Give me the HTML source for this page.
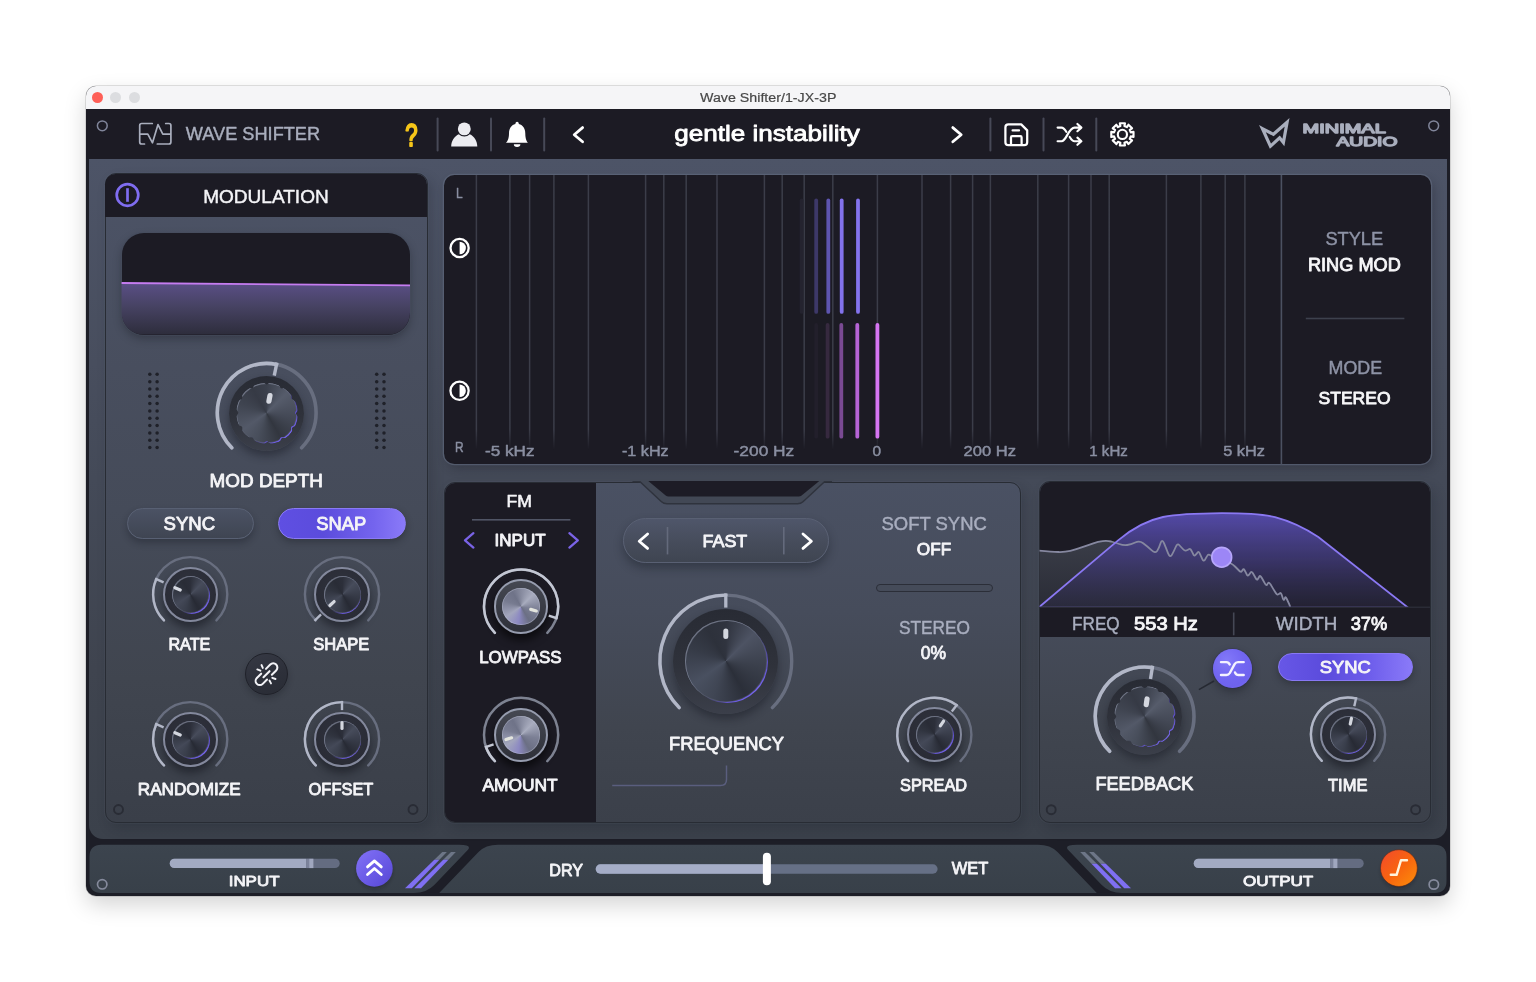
<!DOCTYPE html>
<html><head><meta charset="utf-8"><title>Wave Shifter</title>
<style>
html,body{margin:0;padding:0;background:#fff;}
#root{position:relative;width:1536px;height:982px;overflow:hidden;background:#fff;font-family:"Liberation Sans",sans-serif;}
#ov{position:absolute;left:0;top:0;pointer-events:none;will-change:transform;}
.ring,.cap{position:absolute;border-radius:50%;}
.ringD{background:linear-gradient(180deg,#282b34 0%,#2f323b 55%,#3b3f4a 100%);box-shadow:0 5px 9px rgba(20,22,30,.45);}
.ringS{box-sizing:border-box;border:2px solid #83889c;background:radial-gradient(circle at 50% 40%,#30333e 0%,#2a2c36 70%,#24262f 100%);box-shadow:0 6px 9px rgba(18,20,28,.55);}
.ringF{box-sizing:border-box;border:2px solid #969cae;background:linear-gradient(180deg,#454852 0%,#2e3039 100%);box-shadow:0 6px 9px rgba(0,0,0,.6);}
.capD{background:conic-gradient(from 0deg,#30343f 0deg,#4d5363 45deg,#3a3f4b 100deg,#2b2f39 150deg,#404654 200deg,#495060 235deg,#363b47 290deg,#2d313b 330deg,#30343f 360deg);box-shadow:inset 1px 1px .5px rgba(165,170,190,.45),inset 0 0 0 .7px rgba(120,126,148,.35);}
.capM{background:conic-gradient(from 0deg,#3b404c 0deg,#565c6b 45deg,#444956 100deg,#32363f 150deg,#484e5b 200deg,#535968 235deg,#3f4450 290deg,#363a45 330deg,#3b404c 360deg);}
.capS{background:conic-gradient(from 0deg,#2c2f3a 0deg,#474c5b 45deg,#353946 100deg,#272a34 150deg,#3a3f4c 200deg,#444958 235deg,#30343f 290deg,#292c36 330deg,#2c2f3a 360deg);}
.capF{background:conic-gradient(from 0deg,#868a9e 0deg,#a9adbf 45deg,#7c8095 100deg,#6b6f84 150deg,#8c89c2 190deg,#a3a6bd 235deg,#777b90 290deg,#6f7388 330deg,#868a9e 360deg);box-shadow:inset 0 0 0 .8px rgba(200,205,225,.4);}
.glow{background:conic-gradient(from 0deg,rgba(0,0,0,0) 0deg,rgba(0,0,0,0) 40deg,#5a4cc8 80deg,#7766ee 130deg,#6a5ae0 175deg,rgba(0,0,0,0) 215deg,rgba(0,0,0,0) 360deg);}

</style></head><body>
<div id="root">
<div class="" style="position:absolute;left:86px;top:86px;width:1364px;height:810px;border-radius:10px;background:#1d1e27;box-shadow:0 9px 22px rgba(0,0,0,.17),0 0 0 .5px rgba(0,0,0,.22);"></div>
<div class="" style="position:absolute;left:86px;top:86px;width:1364px;height:23px;border-radius:10px 10px 0 0;background:#f5f5f7;"></div>
<div class="" style="position:absolute;left:91.7px;top:91.7px;width:11.199999999999989px;height:11.199999999999989px;border-radius:50%;background:#fe5f57;"></div>
<div class="" style="position:absolute;left:110.2px;top:91.7px;width:11.199999999999989px;height:11.199999999999989px;border-radius:50%;background:#dcdde0;"></div>
<div class="" style="position:absolute;left:128.70000000000002px;top:91.7px;width:11.199999999999989px;height:11.199999999999989px;border-radius:50%;background:#dcdde0;"></div>
<div class="" style="position:absolute;left:86px;top:109px;width:1364px;height:49.5px;background:#1c1b24;"></div>
<div class="" style="position:absolute;left:89px;top:158.5px;width:1358px;height:680.5px;border-radius:0 0 14px 14px;background:linear-gradient(180deg,#4d5467 0%,#484e5e 30%,#444a58 47%,#3f444f 75%,#3b414b 100%);"></div>
<div class="" style="position:absolute;left:104.5px;top:173px;width:323.0px;height:650px;border-radius:11px;box-sizing:border-box;border:1.6px solid #282c34;box-shadow:0 0 0 1px rgba(110,118,138,.10), 4px 6px 12px rgba(25,28,36,.22);background:linear-gradient(180deg,#4c5366 0%,#484e5e 30%,#454b59 52%,#40454f 78%,#3a3f49 100%);"></div>
<div class="" style="position:absolute;left:105px;top:173.5px;width:322px;height:43.5px;border-radius:10.5px 10.5px 0 0;background:#1c1b24;"></div>
<div class="" style="position:absolute;left:121.6px;top:233px;width:288.4px;height:101.60000000000002px;border-radius:22px;background:#1c1b24;overflow:hidden;box-shadow:0 0 0 1px rgba(70,76,92,.55),0 4px 8px rgba(20,22,30,.35);"></div>
<div class="ring ringD" style="left:229.1px;top:375.8px;width:75.2px;height:75.2px"></div>
<div class="cap glow" style="left:237.3px;top:383.3px;width:60.6px;height:60.6px;clip-path:path('M30.30,1.90L30.80,1.80L31.30,1.54L31.83,1.19L32.36,0.84L32.90,0.56L33.44,0.39L33.98,0.32L34.51,0.33L35.04,0.38L35.56,0.46L36.08,0.56L36.60,0.66L37.12,0.78L37.63,0.90L38.14,1.03L38.65,1.17L39.16,1.32L39.66,1.48L40.16,1.65L40.66,1.83L41.16,2.02L41.64,2.24L42.10,2.50L42.53,2.83L42.91,3.25L43.25,3.76L43.53,4.33L43.81,4.89L44.12,5.37L44.50,5.70L44.98,5.87L45.55,5.90L46.18,5.85L46.81,5.82L47.42,5.85L47.98,5.97L48.48,6.18L48.93,6.45L49.36,6.76L49.78,7.09L50.18,7.43L50.57,7.78L50.96,8.14L51.35,8.50L51.73,8.87L52.10,9.25L52.46,9.64L52.82,10.03L53.17,10.42L53.51,10.82L53.84,11.24L54.15,11.67L54.42,12.12L54.63,12.62L54.75,13.18L54.78,13.79L54.75,14.42L54.70,15.05L54.73,15.62L54.90,16.10L55.23,16.48L55.71,16.79L56.27,17.07L56.84,17.35L57.35,17.69L57.77,18.07L58.10,18.50L58.36,18.96L58.58,19.44L58.77,19.94L58.95,20.44L59.12,20.94L59.28,21.44L59.43,21.95L59.57,22.46L59.70,22.97L59.82,23.48L59.94,24.00L60.04,24.52L60.14,25.04L60.22,25.56L60.27,26.09L60.28,26.62L60.21,27.16L60.04,27.70L59.76,28.24L59.41,28.77L59.06,29.30L58.80,29.80L58.70,30.30L58.80,30.80L59.06,31.30L59.41,31.83L59.76,32.36L60.04,32.90L60.21,33.44L60.28,33.98L60.27,34.51L60.22,35.04L60.14,35.56L60.04,36.08L59.94,36.60L59.82,37.12L59.70,37.63L59.57,38.14L59.43,38.65L59.28,39.16L59.12,39.66L58.95,40.16L58.77,40.66L58.58,41.16L58.36,41.64L58.10,42.10L57.77,42.53L57.35,42.91L56.84,43.25L56.27,43.53L55.71,43.81L55.23,44.12L54.90,44.50L54.73,44.98L54.70,45.55L54.75,46.18L54.78,46.81L54.75,47.42L54.63,47.98L54.42,48.48L54.15,48.93L53.84,49.36L53.51,49.78L53.17,50.18L52.82,50.57L52.46,50.96L52.10,51.35L51.73,51.73L51.35,52.10L50.96,52.46L50.57,52.82L50.18,53.17L49.78,53.51L49.36,53.84L48.93,54.15L48.48,54.42L47.98,54.63L47.42,54.75L46.81,54.78L46.18,54.75L45.55,54.70L44.98,54.73L44.50,54.90L44.12,55.23L43.81,55.71L43.53,56.27L43.25,56.84L42.91,57.35L42.53,57.77L42.10,58.10L41.64,58.36L41.16,58.58L40.66,58.77L40.16,58.95L39.66,59.12L39.16,59.28L38.65,59.43L38.14,59.57L37.63,59.70L37.12,59.82L36.60,59.94L36.08,60.04L35.56,60.14L35.04,60.22L34.51,60.27L33.98,60.28L33.44,60.21L32.90,60.04L32.36,59.76L31.83,59.41L31.30,59.06L30.80,58.80L30.30,58.70L29.80,58.80L29.30,59.06L28.77,59.41L28.24,59.76L27.70,60.04L27.16,60.21L26.62,60.28L26.09,60.27L25.56,60.22L25.04,60.14L24.52,60.04L24.00,59.94L23.48,59.82L22.97,59.70L22.46,59.57L21.95,59.43L21.44,59.28L20.94,59.12L20.44,58.95L19.94,58.77L19.44,58.58L18.96,58.36L18.50,58.10L18.07,57.77L17.69,57.35L17.35,56.84L17.07,56.27L16.79,55.71L16.48,55.23L16.10,54.90L15.62,54.73L15.05,54.70L14.42,54.75L13.79,54.78L13.18,54.75L12.62,54.63L12.12,54.42L11.67,54.15L11.24,53.84L10.82,53.51L10.42,53.17L10.03,52.82L9.64,52.46L9.25,52.10L8.87,51.73L8.50,51.35L8.14,50.96L7.78,50.57L7.43,50.18L7.09,49.78L6.76,49.36L6.45,48.93L6.18,48.48L5.97,47.98L5.85,47.42L5.82,46.81L5.85,46.18L5.90,45.55L5.87,44.98L5.70,44.50L5.37,44.12L4.89,43.81L4.33,43.53L3.76,43.25L3.25,42.91L2.83,42.53L2.50,42.10L2.24,41.64L2.02,41.16L1.83,40.66L1.65,40.16L1.48,39.66L1.32,39.16L1.17,38.65L1.03,38.14L0.90,37.63L0.78,37.12L0.66,36.60L0.56,36.08L0.46,35.56L0.38,35.04L0.33,34.51L0.32,33.98L0.39,33.44L0.56,32.90L0.84,32.36L1.19,31.83L1.54,31.30L1.80,30.80L1.90,30.30L1.80,29.80L1.54,29.30L1.19,28.77L0.84,28.24L0.56,27.70L0.39,27.16L0.32,26.62L0.33,26.09L0.38,25.56L0.46,25.04L0.56,24.52L0.66,24.00L0.78,23.48L0.90,22.97L1.03,22.46L1.17,21.95L1.32,21.44L1.48,20.94L1.65,20.44L1.83,19.94L2.02,19.44L2.24,18.96L2.50,18.50L2.83,18.07L3.25,17.69L3.76,17.35L4.33,17.07L4.89,16.79L5.37,16.48L5.70,16.10L5.87,15.62L5.90,15.05L5.85,14.42L5.82,13.79L5.85,13.18L5.97,12.62L6.18,12.12L6.45,11.67L6.76,11.24L7.09,10.82L7.43,10.42L7.78,10.03L8.14,9.64L8.50,9.25L8.87,8.87L9.25,8.50L9.64,8.14L10.03,7.78L10.42,7.43L10.82,7.09L11.24,6.76L11.67,6.45L12.12,6.18L12.62,5.97L13.18,5.85L13.79,5.82L14.42,5.85L15.05,5.90L15.62,5.87L16.10,5.70L16.48,5.37L16.79,4.89L17.07,4.33L17.35,3.76L17.69,3.25L18.07,2.83L18.50,2.50L18.96,2.24L19.44,2.02L19.94,1.83L20.44,1.65L20.94,1.48L21.44,1.32L21.95,1.17L22.46,1.03L22.97,0.90L23.48,0.78L24.00,0.66L24.52,0.56L25.04,0.46L25.56,0.38L26.09,0.33L26.62,0.32L27.16,0.39L27.70,0.56L28.24,0.84L28.77,1.19L29.30,1.54L29.80,1.80Z');"></div>
<div class="cap capD capM" style="left:236.4px;top:382.5px;width:60.6px;height:60.6px;clip-path:path('M30.30,1.90L30.80,1.80L31.30,1.54L31.83,1.19L32.36,0.84L32.90,0.56L33.44,0.39L33.98,0.32L34.51,0.33L35.04,0.38L35.56,0.46L36.08,0.56L36.60,0.66L37.12,0.78L37.63,0.90L38.14,1.03L38.65,1.17L39.16,1.32L39.66,1.48L40.16,1.65L40.66,1.83L41.16,2.02L41.64,2.24L42.10,2.50L42.53,2.83L42.91,3.25L43.25,3.76L43.53,4.33L43.81,4.89L44.12,5.37L44.50,5.70L44.98,5.87L45.55,5.90L46.18,5.85L46.81,5.82L47.42,5.85L47.98,5.97L48.48,6.18L48.93,6.45L49.36,6.76L49.78,7.09L50.18,7.43L50.57,7.78L50.96,8.14L51.35,8.50L51.73,8.87L52.10,9.25L52.46,9.64L52.82,10.03L53.17,10.42L53.51,10.82L53.84,11.24L54.15,11.67L54.42,12.12L54.63,12.62L54.75,13.18L54.78,13.79L54.75,14.42L54.70,15.05L54.73,15.62L54.90,16.10L55.23,16.48L55.71,16.79L56.27,17.07L56.84,17.35L57.35,17.69L57.77,18.07L58.10,18.50L58.36,18.96L58.58,19.44L58.77,19.94L58.95,20.44L59.12,20.94L59.28,21.44L59.43,21.95L59.57,22.46L59.70,22.97L59.82,23.48L59.94,24.00L60.04,24.52L60.14,25.04L60.22,25.56L60.27,26.09L60.28,26.62L60.21,27.16L60.04,27.70L59.76,28.24L59.41,28.77L59.06,29.30L58.80,29.80L58.70,30.30L58.80,30.80L59.06,31.30L59.41,31.83L59.76,32.36L60.04,32.90L60.21,33.44L60.28,33.98L60.27,34.51L60.22,35.04L60.14,35.56L60.04,36.08L59.94,36.60L59.82,37.12L59.70,37.63L59.57,38.14L59.43,38.65L59.28,39.16L59.12,39.66L58.95,40.16L58.77,40.66L58.58,41.16L58.36,41.64L58.10,42.10L57.77,42.53L57.35,42.91L56.84,43.25L56.27,43.53L55.71,43.81L55.23,44.12L54.90,44.50L54.73,44.98L54.70,45.55L54.75,46.18L54.78,46.81L54.75,47.42L54.63,47.98L54.42,48.48L54.15,48.93L53.84,49.36L53.51,49.78L53.17,50.18L52.82,50.57L52.46,50.96L52.10,51.35L51.73,51.73L51.35,52.10L50.96,52.46L50.57,52.82L50.18,53.17L49.78,53.51L49.36,53.84L48.93,54.15L48.48,54.42L47.98,54.63L47.42,54.75L46.81,54.78L46.18,54.75L45.55,54.70L44.98,54.73L44.50,54.90L44.12,55.23L43.81,55.71L43.53,56.27L43.25,56.84L42.91,57.35L42.53,57.77L42.10,58.10L41.64,58.36L41.16,58.58L40.66,58.77L40.16,58.95L39.66,59.12L39.16,59.28L38.65,59.43L38.14,59.57L37.63,59.70L37.12,59.82L36.60,59.94L36.08,60.04L35.56,60.14L35.04,60.22L34.51,60.27L33.98,60.28L33.44,60.21L32.90,60.04L32.36,59.76L31.83,59.41L31.30,59.06L30.80,58.80L30.30,58.70L29.80,58.80L29.30,59.06L28.77,59.41L28.24,59.76L27.70,60.04L27.16,60.21L26.62,60.28L26.09,60.27L25.56,60.22L25.04,60.14L24.52,60.04L24.00,59.94L23.48,59.82L22.97,59.70L22.46,59.57L21.95,59.43L21.44,59.28L20.94,59.12L20.44,58.95L19.94,58.77L19.44,58.58L18.96,58.36L18.50,58.10L18.07,57.77L17.69,57.35L17.35,56.84L17.07,56.27L16.79,55.71L16.48,55.23L16.10,54.90L15.62,54.73L15.05,54.70L14.42,54.75L13.79,54.78L13.18,54.75L12.62,54.63L12.12,54.42L11.67,54.15L11.24,53.84L10.82,53.51L10.42,53.17L10.03,52.82L9.64,52.46L9.25,52.10L8.87,51.73L8.50,51.35L8.14,50.96L7.78,50.57L7.43,50.18L7.09,49.78L6.76,49.36L6.45,48.93L6.18,48.48L5.97,47.98L5.85,47.42L5.82,46.81L5.85,46.18L5.90,45.55L5.87,44.98L5.70,44.50L5.37,44.12L4.89,43.81L4.33,43.53L3.76,43.25L3.25,42.91L2.83,42.53L2.50,42.10L2.24,41.64L2.02,41.16L1.83,40.66L1.65,40.16L1.48,39.66L1.32,39.16L1.17,38.65L1.03,38.14L0.90,37.63L0.78,37.12L0.66,36.60L0.56,36.08L0.46,35.56L0.38,35.04L0.33,34.51L0.32,33.98L0.39,33.44L0.56,32.90L0.84,32.36L1.19,31.83L1.54,31.30L1.80,30.80L1.90,30.30L1.80,29.80L1.54,29.30L1.19,28.77L0.84,28.24L0.56,27.70L0.39,27.16L0.32,26.62L0.33,26.09L0.38,25.56L0.46,25.04L0.56,24.52L0.66,24.00L0.78,23.48L0.90,22.97L1.03,22.46L1.17,21.95L1.32,21.44L1.48,20.94L1.65,20.44L1.83,19.94L2.02,19.44L2.24,18.96L2.50,18.50L2.83,18.07L3.25,17.69L3.76,17.35L4.33,17.07L4.89,16.79L5.37,16.48L5.70,16.10L5.87,15.62L5.90,15.05L5.85,14.42L5.82,13.79L5.85,13.18L5.97,12.62L6.18,12.12L6.45,11.67L6.76,11.24L7.09,10.82L7.43,10.42L7.78,10.03L8.14,9.64L8.50,9.25L8.87,8.87L9.25,8.50L9.64,8.14L10.03,7.78L10.42,7.43L10.82,7.09L11.24,6.76L11.67,6.45L12.12,6.18L12.62,5.97L13.18,5.85L13.79,5.82L14.42,5.85L15.05,5.90L15.62,5.87L16.10,5.70L16.48,5.37L16.79,4.89L17.07,4.33L17.35,3.76L17.69,3.25L18.07,2.83L18.50,2.50L18.96,2.24L19.44,2.02L19.94,1.83L20.44,1.65L20.94,1.48L21.44,1.32L21.95,1.17L22.46,1.03L22.97,0.90L23.48,0.78L24.00,0.66L24.52,0.56L25.04,0.46L25.56,0.38L26.09,0.33L26.62,0.32L27.16,0.39L27.70,0.56L28.24,0.84L28.77,1.19L29.30,1.54L29.80,1.80Z');"></div>
<div class="" style="position:absolute;left:126.7px;top:508.1px;width:126.99999999999999px;height:30.799999999999955px;border-radius:16px;box-sizing:border-box;border:1px solid #586073;background:linear-gradient(180deg,#4b5264 0%,#3f4552 100%);box-shadow:0 4px 7px rgba(20,22,30,.32);"></div>
<div class="" style="position:absolute;left:277.9px;top:508.1px;width:127.80000000000001px;height:30.5px;border-radius:16px;box-sizing:border-box;border:1.2px solid #8a7af6;background:linear-gradient(90deg,#5f4fe2 0%,#5b4cdc 35%,#7464ee 75%,#8a7af8 100%);box-shadow:0 3px 7px rgba(20,22,30,.35);"></div>
<div class="ring ringS" style="left:162.6px;top:566.6px;width:55.2px;height:55.2px"></div>
<div class="cap glow" style="left:172.6px;top:576.5px;width:37.0px;height:37.0px;"></div>
<div class="cap capD capS" style="left:171.7px;top:575.7px;width:37.0px;height:37.0px;"></div>
<div class="ring ringS" style="left:314.4px;top:566.6px;width:55.2px;height:55.2px"></div>
<div class="cap glow" style="left:324.4px;top:576.5px;width:37.0px;height:37.0px;"></div>
<div class="cap capD capS" style="left:323.5px;top:575.7px;width:37.0px;height:37.0px;"></div>
<div class="ring ringS" style="left:162.6px;top:711.6px;width:55.2px;height:55.2px"></div>
<div class="cap glow" style="left:172.6px;top:721.5px;width:37.0px;height:37.0px;"></div>
<div class="cap capD capS" style="left:171.7px;top:720.7px;width:37.0px;height:37.0px;"></div>
<div class="ring ringS" style="left:314.4px;top:711.6px;width:55.2px;height:55.2px"></div>
<div class="cap glow" style="left:324.4px;top:721.5px;width:37.0px;height:37.0px;"></div>
<div class="cap capD capS" style="left:323.5px;top:720.7px;width:37.0px;height:37.0px;"></div>
<div class="" style="position:absolute;left:245.4px;top:653.1px;width:42.20000000000002px;height:42.19999999999993px;border-radius:50%;box-sizing:border-box;border:1.5px solid #1f2129;background:linear-gradient(160deg,#363944 0%,#2d303a 55%,#292c35 100%);box-shadow:0 3px 6px rgba(20,22,30,.3);"></div>
<div class="" style="position:absolute;left:444px;top:175px;width:987.4000000000001px;height:289.2px;border-radius:10.5px;background:#1c1b24;box-shadow:0 0 0 1.3px rgba(98,108,128,.6),3px 5px 10px rgba(25,28,36,.3);"></div>
<div class="" style="position:absolute;left:443.5px;top:481.5px;width:577.5px;height:341.5px;border-radius:11px;box-sizing:border-box;border:1.6px solid #282c34;box-shadow:0 0 0 1px rgba(110,118,138,.10), 4px 6px 12px rgba(25,28,36,.22);background:linear-gradient(180deg,#4a5163 0%,#464c5b 38%,#40454f 72%,#3b404a 100%);overflow:hidden;"></div>
<div class="" style="position:absolute;left:444.5px;top:482.5px;width:151.70000000000005px;height:339.5px;border-radius:10px 0 0 10px;background:#1c1b24;"></div>
<div class="ring ringF" style="left:493.8px;top:579.3px;width:54.6px;height:54.6px"></div>
<div class="cap capF" style="left:502.4px;top:587.9px;width:37.4px;height:37.4px;"></div>
<div class="ring ringF" style="left:493.8px;top:707.6px;width:54.6px;height:54.6px"></div>
<div class="cap capF" style="left:502.4px;top:716.2px;width:37.4px;height:37.4px;"></div>
<div class="" style="position:absolute;left:622.6px;top:517.6px;width:206.19999999999993px;height:45.799999999999955px;border-radius:23px;box-sizing:border-box;border:1px solid #596073;background:linear-gradient(180deg,#4f566a 0%,#464c5b 55%,#3f4551 100%);box-shadow:0 5px 10px rgba(22,25,33,.38);"></div>
<div class="ring ringD" style="left:673.1px;top:608.9px;width:105.4px;height:105.4px"></div>
<div class="cap glow" style="left:685.6px;top:620.7px;width:82.2px;height:82.2px;"></div>
<div class="cap capD" style="left:684.7px;top:619.9px;width:82.2px;height:82.2px;"></div>
<div class="" style="position:absolute;left:876.3px;top:584.4px;width:116.40000000000009px;height:7.800000000000068px;border-radius:4px;box-sizing:border-box;border:1.6px solid #2b2e38;background:#454b59;"></div>
<div class="ring ringS" style="left:906.7px;top:707.2px;width:55.2px;height:55.2px"></div>
<div class="cap glow" style="left:916.7px;top:717.1px;width:37.0px;height:37.0px;"></div>
<div class="cap capD capS" style="left:915.8px;top:716.3px;width:37.0px;height:37.0px;"></div>
<div class="" style="position:absolute;left:1038.5px;top:481px;width:392.70000000000005px;height:342px;border-radius:11px;box-sizing:border-box;border:1.6px solid #282c34;box-shadow:0 0 0 1px rgba(110,118,138,.10), 4px 6px 12px rgba(25,28,36,.22);background:linear-gradient(180deg,#4a5163 0%,#464c5b 38%,#40454f 72%,#3b404a 100%);"></div>
<div class="" style="position:absolute;left:1039.5px;top:482px;width:390.70000000000005px;height:155.39999999999998px;border-radius:10px 10px 0 0;background:#1c1b24;"></div>
<div class="ring ringD" style="left:1107.0px;top:679.4px;width:75.2px;height:75.2px"></div>
<div class="cap glow" style="left:1115.2px;top:686.9px;width:60.6px;height:60.6px;clip-path:path('M30.30,1.90L30.80,1.80L31.30,1.54L31.83,1.19L32.36,0.84L32.90,0.56L33.44,0.39L33.98,0.32L34.51,0.33L35.04,0.38L35.56,0.46L36.08,0.56L36.60,0.66L37.12,0.78L37.63,0.90L38.14,1.03L38.65,1.17L39.16,1.32L39.66,1.48L40.16,1.65L40.66,1.83L41.16,2.02L41.64,2.24L42.10,2.50L42.53,2.83L42.91,3.25L43.25,3.76L43.53,4.33L43.81,4.89L44.12,5.37L44.50,5.70L44.98,5.87L45.55,5.90L46.18,5.85L46.81,5.82L47.42,5.85L47.98,5.97L48.48,6.18L48.93,6.45L49.36,6.76L49.78,7.09L50.18,7.43L50.57,7.78L50.96,8.14L51.35,8.50L51.73,8.87L52.10,9.25L52.46,9.64L52.82,10.03L53.17,10.42L53.51,10.82L53.84,11.24L54.15,11.67L54.42,12.12L54.63,12.62L54.75,13.18L54.78,13.79L54.75,14.42L54.70,15.05L54.73,15.62L54.90,16.10L55.23,16.48L55.71,16.79L56.27,17.07L56.84,17.35L57.35,17.69L57.77,18.07L58.10,18.50L58.36,18.96L58.58,19.44L58.77,19.94L58.95,20.44L59.12,20.94L59.28,21.44L59.43,21.95L59.57,22.46L59.70,22.97L59.82,23.48L59.94,24.00L60.04,24.52L60.14,25.04L60.22,25.56L60.27,26.09L60.28,26.62L60.21,27.16L60.04,27.70L59.76,28.24L59.41,28.77L59.06,29.30L58.80,29.80L58.70,30.30L58.80,30.80L59.06,31.30L59.41,31.83L59.76,32.36L60.04,32.90L60.21,33.44L60.28,33.98L60.27,34.51L60.22,35.04L60.14,35.56L60.04,36.08L59.94,36.60L59.82,37.12L59.70,37.63L59.57,38.14L59.43,38.65L59.28,39.16L59.12,39.66L58.95,40.16L58.77,40.66L58.58,41.16L58.36,41.64L58.10,42.10L57.77,42.53L57.35,42.91L56.84,43.25L56.27,43.53L55.71,43.81L55.23,44.12L54.90,44.50L54.73,44.98L54.70,45.55L54.75,46.18L54.78,46.81L54.75,47.42L54.63,47.98L54.42,48.48L54.15,48.93L53.84,49.36L53.51,49.78L53.17,50.18L52.82,50.57L52.46,50.96L52.10,51.35L51.73,51.73L51.35,52.10L50.96,52.46L50.57,52.82L50.18,53.17L49.78,53.51L49.36,53.84L48.93,54.15L48.48,54.42L47.98,54.63L47.42,54.75L46.81,54.78L46.18,54.75L45.55,54.70L44.98,54.73L44.50,54.90L44.12,55.23L43.81,55.71L43.53,56.27L43.25,56.84L42.91,57.35L42.53,57.77L42.10,58.10L41.64,58.36L41.16,58.58L40.66,58.77L40.16,58.95L39.66,59.12L39.16,59.28L38.65,59.43L38.14,59.57L37.63,59.70L37.12,59.82L36.60,59.94L36.08,60.04L35.56,60.14L35.04,60.22L34.51,60.27L33.98,60.28L33.44,60.21L32.90,60.04L32.36,59.76L31.83,59.41L31.30,59.06L30.80,58.80L30.30,58.70L29.80,58.80L29.30,59.06L28.77,59.41L28.24,59.76L27.70,60.04L27.16,60.21L26.62,60.28L26.09,60.27L25.56,60.22L25.04,60.14L24.52,60.04L24.00,59.94L23.48,59.82L22.97,59.70L22.46,59.57L21.95,59.43L21.44,59.28L20.94,59.12L20.44,58.95L19.94,58.77L19.44,58.58L18.96,58.36L18.50,58.10L18.07,57.77L17.69,57.35L17.35,56.84L17.07,56.27L16.79,55.71L16.48,55.23L16.10,54.90L15.62,54.73L15.05,54.70L14.42,54.75L13.79,54.78L13.18,54.75L12.62,54.63L12.12,54.42L11.67,54.15L11.24,53.84L10.82,53.51L10.42,53.17L10.03,52.82L9.64,52.46L9.25,52.10L8.87,51.73L8.50,51.35L8.14,50.96L7.78,50.57L7.43,50.18L7.09,49.78L6.76,49.36L6.45,48.93L6.18,48.48L5.97,47.98L5.85,47.42L5.82,46.81L5.85,46.18L5.90,45.55L5.87,44.98L5.70,44.50L5.37,44.12L4.89,43.81L4.33,43.53L3.76,43.25L3.25,42.91L2.83,42.53L2.50,42.10L2.24,41.64L2.02,41.16L1.83,40.66L1.65,40.16L1.48,39.66L1.32,39.16L1.17,38.65L1.03,38.14L0.90,37.63L0.78,37.12L0.66,36.60L0.56,36.08L0.46,35.56L0.38,35.04L0.33,34.51L0.32,33.98L0.39,33.44L0.56,32.90L0.84,32.36L1.19,31.83L1.54,31.30L1.80,30.80L1.90,30.30L1.80,29.80L1.54,29.30L1.19,28.77L0.84,28.24L0.56,27.70L0.39,27.16L0.32,26.62L0.33,26.09L0.38,25.56L0.46,25.04L0.56,24.52L0.66,24.00L0.78,23.48L0.90,22.97L1.03,22.46L1.17,21.95L1.32,21.44L1.48,20.94L1.65,20.44L1.83,19.94L2.02,19.44L2.24,18.96L2.50,18.50L2.83,18.07L3.25,17.69L3.76,17.35L4.33,17.07L4.89,16.79L5.37,16.48L5.70,16.10L5.87,15.62L5.90,15.05L5.85,14.42L5.82,13.79L5.85,13.18L5.97,12.62L6.18,12.12L6.45,11.67L6.76,11.24L7.09,10.82L7.43,10.42L7.78,10.03L8.14,9.64L8.50,9.25L8.87,8.87L9.25,8.50L9.64,8.14L10.03,7.78L10.42,7.43L10.82,7.09L11.24,6.76L11.67,6.45L12.12,6.18L12.62,5.97L13.18,5.85L13.79,5.82L14.42,5.85L15.05,5.90L15.62,5.87L16.10,5.70L16.48,5.37L16.79,4.89L17.07,4.33L17.35,3.76L17.69,3.25L18.07,2.83L18.50,2.50L18.96,2.24L19.44,2.02L19.94,1.83L20.44,1.65L20.94,1.48L21.44,1.32L21.95,1.17L22.46,1.03L22.97,0.90L23.48,0.78L24.00,0.66L24.52,0.56L25.04,0.46L25.56,0.38L26.09,0.33L26.62,0.32L27.16,0.39L27.70,0.56L28.24,0.84L28.77,1.19L29.30,1.54L29.80,1.80Z');"></div>
<div class="cap capD capM" style="left:1114.3px;top:686.1px;width:60.6px;height:60.6px;clip-path:path('M30.30,1.90L30.80,1.80L31.30,1.54L31.83,1.19L32.36,0.84L32.90,0.56L33.44,0.39L33.98,0.32L34.51,0.33L35.04,0.38L35.56,0.46L36.08,0.56L36.60,0.66L37.12,0.78L37.63,0.90L38.14,1.03L38.65,1.17L39.16,1.32L39.66,1.48L40.16,1.65L40.66,1.83L41.16,2.02L41.64,2.24L42.10,2.50L42.53,2.83L42.91,3.25L43.25,3.76L43.53,4.33L43.81,4.89L44.12,5.37L44.50,5.70L44.98,5.87L45.55,5.90L46.18,5.85L46.81,5.82L47.42,5.85L47.98,5.97L48.48,6.18L48.93,6.45L49.36,6.76L49.78,7.09L50.18,7.43L50.57,7.78L50.96,8.14L51.35,8.50L51.73,8.87L52.10,9.25L52.46,9.64L52.82,10.03L53.17,10.42L53.51,10.82L53.84,11.24L54.15,11.67L54.42,12.12L54.63,12.62L54.75,13.18L54.78,13.79L54.75,14.42L54.70,15.05L54.73,15.62L54.90,16.10L55.23,16.48L55.71,16.79L56.27,17.07L56.84,17.35L57.35,17.69L57.77,18.07L58.10,18.50L58.36,18.96L58.58,19.44L58.77,19.94L58.95,20.44L59.12,20.94L59.28,21.44L59.43,21.95L59.57,22.46L59.70,22.97L59.82,23.48L59.94,24.00L60.04,24.52L60.14,25.04L60.22,25.56L60.27,26.09L60.28,26.62L60.21,27.16L60.04,27.70L59.76,28.24L59.41,28.77L59.06,29.30L58.80,29.80L58.70,30.30L58.80,30.80L59.06,31.30L59.41,31.83L59.76,32.36L60.04,32.90L60.21,33.44L60.28,33.98L60.27,34.51L60.22,35.04L60.14,35.56L60.04,36.08L59.94,36.60L59.82,37.12L59.70,37.63L59.57,38.14L59.43,38.65L59.28,39.16L59.12,39.66L58.95,40.16L58.77,40.66L58.58,41.16L58.36,41.64L58.10,42.10L57.77,42.53L57.35,42.91L56.84,43.25L56.27,43.53L55.71,43.81L55.23,44.12L54.90,44.50L54.73,44.98L54.70,45.55L54.75,46.18L54.78,46.81L54.75,47.42L54.63,47.98L54.42,48.48L54.15,48.93L53.84,49.36L53.51,49.78L53.17,50.18L52.82,50.57L52.46,50.96L52.10,51.35L51.73,51.73L51.35,52.10L50.96,52.46L50.57,52.82L50.18,53.17L49.78,53.51L49.36,53.84L48.93,54.15L48.48,54.42L47.98,54.63L47.42,54.75L46.81,54.78L46.18,54.75L45.55,54.70L44.98,54.73L44.50,54.90L44.12,55.23L43.81,55.71L43.53,56.27L43.25,56.84L42.91,57.35L42.53,57.77L42.10,58.10L41.64,58.36L41.16,58.58L40.66,58.77L40.16,58.95L39.66,59.12L39.16,59.28L38.65,59.43L38.14,59.57L37.63,59.70L37.12,59.82L36.60,59.94L36.08,60.04L35.56,60.14L35.04,60.22L34.51,60.27L33.98,60.28L33.44,60.21L32.90,60.04L32.36,59.76L31.83,59.41L31.30,59.06L30.80,58.80L30.30,58.70L29.80,58.80L29.30,59.06L28.77,59.41L28.24,59.76L27.70,60.04L27.16,60.21L26.62,60.28L26.09,60.27L25.56,60.22L25.04,60.14L24.52,60.04L24.00,59.94L23.48,59.82L22.97,59.70L22.46,59.57L21.95,59.43L21.44,59.28L20.94,59.12L20.44,58.95L19.94,58.77L19.44,58.58L18.96,58.36L18.50,58.10L18.07,57.77L17.69,57.35L17.35,56.84L17.07,56.27L16.79,55.71L16.48,55.23L16.10,54.90L15.62,54.73L15.05,54.70L14.42,54.75L13.79,54.78L13.18,54.75L12.62,54.63L12.12,54.42L11.67,54.15L11.24,53.84L10.82,53.51L10.42,53.17L10.03,52.82L9.64,52.46L9.25,52.10L8.87,51.73L8.50,51.35L8.14,50.96L7.78,50.57L7.43,50.18L7.09,49.78L6.76,49.36L6.45,48.93L6.18,48.48L5.97,47.98L5.85,47.42L5.82,46.81L5.85,46.18L5.90,45.55L5.87,44.98L5.70,44.50L5.37,44.12L4.89,43.81L4.33,43.53L3.76,43.25L3.25,42.91L2.83,42.53L2.50,42.10L2.24,41.64L2.02,41.16L1.83,40.66L1.65,40.16L1.48,39.66L1.32,39.16L1.17,38.65L1.03,38.14L0.90,37.63L0.78,37.12L0.66,36.60L0.56,36.08L0.46,35.56L0.38,35.04L0.33,34.51L0.32,33.98L0.39,33.44L0.56,32.90L0.84,32.36L1.19,31.83L1.54,31.30L1.80,30.80L1.90,30.30L1.80,29.80L1.54,29.30L1.19,28.77L0.84,28.24L0.56,27.70L0.39,27.16L0.32,26.62L0.33,26.09L0.38,25.56L0.46,25.04L0.56,24.52L0.66,24.00L0.78,23.48L0.90,22.97L1.03,22.46L1.17,21.95L1.32,21.44L1.48,20.94L1.65,20.44L1.83,19.94L2.02,19.44L2.24,18.96L2.50,18.50L2.83,18.07L3.25,17.69L3.76,17.35L4.33,17.07L4.89,16.79L5.37,16.48L5.70,16.10L5.87,15.62L5.90,15.05L5.85,14.42L5.82,13.79L5.85,13.18L5.97,12.62L6.18,12.12L6.45,11.67L6.76,11.24L7.09,10.82L7.43,10.42L7.78,10.03L8.14,9.64L8.50,9.25L8.87,8.87L9.25,8.50L9.64,8.14L10.03,7.78L10.42,7.43L10.82,7.09L11.24,6.76L11.67,6.45L12.12,6.18L12.62,5.97L13.18,5.85L13.79,5.82L14.42,5.85L15.05,5.90L15.62,5.87L16.10,5.70L16.48,5.37L16.79,4.89L17.07,4.33L17.35,3.76L17.69,3.25L18.07,2.83L18.50,2.50L18.96,2.24L19.44,2.02L19.94,1.83L20.44,1.65L20.94,1.48L21.44,1.32L21.95,1.17L22.46,1.03L22.97,0.90L23.48,0.78L24.00,0.66L24.52,0.56L25.04,0.46L25.56,0.38L26.09,0.33L26.62,0.32L27.16,0.39L27.70,0.56L28.24,0.84L28.77,1.19L29.30,1.54L29.80,1.80Z');"></div>
<div class="" style="position:absolute;left:1213.1px;top:649.3px;width:38.600000000000136px;height:38.60000000000002px;border-radius:50%;background:radial-gradient(circle at 35% 30%,#8379f8 0%,#7266f2 45%,#6e62ee 70%,#7a6efa 100%);box-shadow:0 0 0 .8px rgba(40,36,90,.35),0 4px 8px rgba(20,22,30,.4);"></div>
<div class="" style="position:absolute;left:1278.3px;top:652.9px;width:134.79999999999995px;height:28.5px;border-radius:15px;box-sizing:border-box;border:1.2px solid #8878f4;background:linear-gradient(90deg,#6757e6 0%,#5b4bdc 35%,#6f5fec 70%,#8a7af8 100%);box-shadow:0 3px 7px rgba(20,22,30,.35);"></div>
<div class="ring ringS" style="left:1320.4px;top:707.0px;width:55.2px;height:55.2px"></div>
<div class="cap glow" style="left:1330.4px;top:716.9px;width:37.0px;height:37.0px;"></div>
<div class="cap capD capS" style="left:1329.5px;top:716.1px;width:37.0px;height:37.0px;"></div>
<svg id="ov" width="1536" height="982" viewBox="0 0 1536 982" font-family='"Liberation Sans", sans-serif'>
<text x="700.0" y="101.5" font-size="13.08" fill="#474747" textLength="136.4" lengthAdjust="spacingAndGlyphs" stroke="#474747" stroke-width="0.2" stroke-linejoin="round">Wave Shifter/1-JX-3P</text>
<circle cx="102.3" cy="125.8" r="4.9" fill="none" stroke="#80859a" stroke-width="1.5"/>
<circle cx="1433.7" cy="125.8" r="4.9" fill="none" stroke="#80859a" stroke-width="1.5"/>
<path d="M152.3,123.5H141.7Q139.7,123.5 139.7,125.5V142Q139.7,144 141.7,144H144.5 M139.7,134.1H147.8L152.5,142.8L158,124.6L162.8,134.1H170.9 M165.7,123.5H168.9Q170.9,123.5 170.9,125.5V142Q170.9,144 168.9,144H157.3" fill="none" stroke="#a9aebd" stroke-width="1.7" stroke-linejoin="round" stroke-linecap="round"/>
<text x="185.8" y="139.8" font-size="18.97" fill="#a9aebd" textLength="134.3" lengthAdjust="spacingAndGlyphs" stroke="#a9aebd" stroke-width="0.45" stroke-linejoin="round">WAVE SHIFTER</text>
<text x="405.2" y="145.7" font-size="31.00" fill="#f6c619" textLength="12.3" lengthAdjust="spacingAndGlyphs" stroke="#f6c619" stroke-width="2.0" stroke-linejoin="round">?</text>
<rect x="436.6" y="117.6" width="2" height="33.8" rx="1" fill="#474957"/>
<rect x="490.0" y="117.6" width="2" height="33.8" rx="1" fill="#474957"/>
<rect x="543.2" y="117.6" width="2" height="33.8" rx="1" fill="#474957"/>
<rect x="989.4" y="117.6" width="2" height="33.8" rx="1" fill="#474957"/>
<rect x="1042.5" y="117.6" width="2" height="33.8" rx="1" fill="#474957"/>
<rect x="1095.3" y="117.6" width="2" height="33.8" rx="1" fill="#474957"/>
<circle cx="464.3" cy="128.9" r="6.45" fill="#ececf1"/><path d="M451.2,146.5C451.2,141 454.5,136.2 458.8,134.3A7.7,7.7 0 0 0 469.8,134.3C474.1,136.2 477.3,141 477.3,146.5Z" fill="#ececf1"/>
<circle cx="517.1" cy="123.4" r="1.6" fill="#fff"/><path d="M505.9,142.8C507.6,141 509,138.5 509,133.4C509,127.6 512.5,123.8 517.1,123.8C521.7,123.8 525.3,127.6 525.3,133.4C525.3,138.5 526.6,141 528,142.8Z" fill="#fff"/><path d="M513.8,144.3A3.3,2.7 0 0 0 520.4,144.3Z" fill="#fff"/>
<path d="M582.6,127.6L574.2,134.7L582.6,141.8" fill="none" stroke="#fff" stroke-width="2.8" stroke-linecap="round" stroke-linejoin="round"/>
<path d="M952.8,127.6L961.2,134.7L952.8,141.8" fill="none" stroke="#fff" stroke-width="2.8" stroke-linecap="round" stroke-linejoin="round"/>
<text x="674.2" y="141.1" font-size="22.00" fill="#fff" textLength="185.6" lengthAdjust="spacingAndGlyphs" stroke="#fff" stroke-width="0.8" stroke-linejoin="round">gentle instability</text>
<path d="M1008.4,124.4H1021.2L1027.2,130.4V142.2Q1027.2,145.2 1024.2,145.2H1008.4Q1005.4,145.2 1005.4,142.2V127.4Q1005.4,124.4 1008.4,124.4Z M1011,145V137.4Q1011,136.2 1012.2,136.2H1020.4Q1021.6,136.2 1021.6,137.4V145 M1012.6,130.4H1019" fill="none" stroke="#fff" stroke-width="2.25" stroke-linejoin="round" stroke-linecap="round"/>
<path d="M1057.6,141.2H1061.5C1066.5,141.2 1068.5,127.6 1074.5,127.6H1081 M1057.6,127.6H1061.5C1063.6,127.6 1065,129.6 1066.3,131.8 M1069.7,137C1071,139.2 1072.4,141.2 1074.5,141.2H1081 M1077.4,124L1081.4,127.6L1077.4,131.2 M1077.4,137.6L1081.4,141.2L1077.4,144.8" fill="none" stroke="#fff" stroke-width="2.15" stroke-linejoin="round" stroke-linecap="round"/>
<path d="M1119.84,123.29L1124.96,123.29L1124.41,126.04L1126.89,127.07L1128.44,124.73L1132.07,128.36L1129.73,129.91L1130.76,132.39L1133.51,131.84L1133.51,136.96L1130.76,136.41L1129.73,138.89L1132.07,140.44L1128.44,144.07L1126.89,141.73L1124.41,142.76L1124.96,145.51L1119.84,145.51L1120.39,142.76L1117.91,141.73L1116.36,144.07L1112.73,140.44L1115.07,138.89L1114.04,136.41L1111.29,136.96L1111.29,131.84L1114.04,132.39L1115.07,129.91L1112.73,128.36L1116.36,124.73L1117.91,127.07L1120.39,126.04Z" fill="none" stroke="#fff" stroke-width="2.15" stroke-linejoin="round"/><circle cx="1122.4" cy="134.4" r="4.6" fill="none" stroke="#fff" stroke-width="2.15"/>
<path d="M1262.4,128.6L1273.4,134.3L1287.1,122.2L1283.4,142.6L1279.6,137.8L1270.4,146.2Z" fill="none" stroke="#a9aebd" stroke-width="3.2" stroke-linejoin="miter" stroke-miterlimit="8"/>
<text x="1302.6" y="133.0" font-size="12.65" fill="#a9aebd" textLength="83.2" lengthAdjust="spacingAndGlyphs" stroke="#a9aebd" stroke-width="1.3" stroke-linejoin="round">MINIMAL</text>
<text x="1336.4" y="146.2" font-size="12.65" fill="#a9aebd" textLength="61.0" lengthAdjust="spacingAndGlyphs" stroke="#a9aebd" stroke-width="1.3" stroke-linejoin="round">AUDIO</text>
<circle cx="127.5" cy="195" r="10.8" fill="none" stroke="#7f6df0" stroke-width="2.7"/><path d="M127.5,188.2V201.8" stroke="#7f6df0" stroke-width="2.7" stroke-linecap="butt"/>
<text x="203.2" y="202.5" font-size="18.82" fill="#f4f4f7" textLength="125.5" lengthAdjust="spacingAndGlyphs" stroke="#f4f4f7" stroke-width="0.45" stroke-linejoin="round">MODULATION</text>
<defs><clipPath id="dispclip"><rect x="121.6" y="233" width="288.4" height="101.6" rx="22"/></clipPath><linearGradient id="dispfill" x1="0" y1="0" x2="0" y2="1"><stop offset="0" stop-color="#5a4f86"/><stop offset="0.45" stop-color="#464262"/><stop offset="1" stop-color="#2c2c3a"/></linearGradient></defs>
<g clip-path="url(#dispclip)"><path d="M121,283L411,285.3V336H121Z" fill="url(#dispfill)"/><path d="M121,283L411,285.3" stroke="#c57cf0" stroke-width="1.8"/></g>
<circle cx="149.8" cy="374.30" r="1.75" fill="#1f2129"/>
<circle cx="149.8" cy="381.63" r="1.75" fill="#1f2129"/>
<circle cx="149.8" cy="388.96" r="1.75" fill="#1f2129"/>
<circle cx="149.8" cy="396.29" r="1.75" fill="#1f2129"/>
<circle cx="149.8" cy="403.62" r="1.75" fill="#1f2129"/>
<circle cx="149.8" cy="410.95" r="1.75" fill="#1f2129"/>
<circle cx="149.8" cy="418.28" r="1.75" fill="#1f2129"/>
<circle cx="149.8" cy="425.61" r="1.75" fill="#1f2129"/>
<circle cx="149.8" cy="432.94" r="1.75" fill="#1f2129"/>
<circle cx="149.8" cy="440.27" r="1.75" fill="#1f2129"/>
<circle cx="149.8" cy="447.60" r="1.75" fill="#1f2129"/>
<circle cx="157.1" cy="374.30" r="1.75" fill="#1f2129"/>
<circle cx="157.1" cy="381.63" r="1.75" fill="#1f2129"/>
<circle cx="157.1" cy="388.96" r="1.75" fill="#1f2129"/>
<circle cx="157.1" cy="396.29" r="1.75" fill="#1f2129"/>
<circle cx="157.1" cy="403.62" r="1.75" fill="#1f2129"/>
<circle cx="157.1" cy="410.95" r="1.75" fill="#1f2129"/>
<circle cx="157.1" cy="418.28" r="1.75" fill="#1f2129"/>
<circle cx="157.1" cy="425.61" r="1.75" fill="#1f2129"/>
<circle cx="157.1" cy="432.94" r="1.75" fill="#1f2129"/>
<circle cx="157.1" cy="440.27" r="1.75" fill="#1f2129"/>
<circle cx="157.1" cy="447.60" r="1.75" fill="#1f2129"/>
<circle cx="376.7" cy="374.30" r="1.75" fill="#1f2129"/>
<circle cx="376.7" cy="381.63" r="1.75" fill="#1f2129"/>
<circle cx="376.7" cy="388.96" r="1.75" fill="#1f2129"/>
<circle cx="376.7" cy="396.29" r="1.75" fill="#1f2129"/>
<circle cx="376.7" cy="403.62" r="1.75" fill="#1f2129"/>
<circle cx="376.7" cy="410.95" r="1.75" fill="#1f2129"/>
<circle cx="376.7" cy="418.28" r="1.75" fill="#1f2129"/>
<circle cx="376.7" cy="425.61" r="1.75" fill="#1f2129"/>
<circle cx="376.7" cy="432.94" r="1.75" fill="#1f2129"/>
<circle cx="376.7" cy="440.27" r="1.75" fill="#1f2129"/>
<circle cx="376.7" cy="447.60" r="1.75" fill="#1f2129"/>
<circle cx="384.0" cy="374.30" r="1.75" fill="#1f2129"/>
<circle cx="384.0" cy="381.63" r="1.75" fill="#1f2129"/>
<circle cx="384.0" cy="388.96" r="1.75" fill="#1f2129"/>
<circle cx="384.0" cy="396.29" r="1.75" fill="#1f2129"/>
<circle cx="384.0" cy="403.62" r="1.75" fill="#1f2129"/>
<circle cx="384.0" cy="410.95" r="1.75" fill="#1f2129"/>
<circle cx="384.0" cy="418.28" r="1.75" fill="#1f2129"/>
<circle cx="384.0" cy="425.61" r="1.75" fill="#1f2129"/>
<circle cx="384.0" cy="432.94" r="1.75" fill="#1f2129"/>
<circle cx="384.0" cy="440.27" r="1.75" fill="#1f2129"/>
<circle cx="384.0" cy="447.60" r="1.75" fill="#1f2129"/>
<path d="M231.77,447.73A49.40,49.40 0 1 1 301.63,447.73" fill="none" stroke="#686e7f" stroke-width="3.6" stroke-linecap="round"/>
<path d="M231.77,447.73A49.40,49.40 0 0 1 276.55,364.39" fill="none" stroke="#b2b7c7" stroke-width="3.6" stroke-linecap="round"/>
<path d="M276.91,362.63L274.26,375.66" stroke="#b2b7c7" stroke-width="3.4"/>
<path d="M268.91,401.21L270.00,395.51" stroke="#d4d7df" stroke-width="5.2" stroke-linecap="round"/>
<text x="209.6" y="486.8" font-size="18.68" fill="#f4f4f7" textLength="113.3" lengthAdjust="spacingAndGlyphs" stroke="#f4f4f7" stroke-width="0.85" stroke-linejoin="round">MOD DEPTH</text>
<text x="163.5" y="529.6" font-size="18.39" fill="#f4f4f7" textLength="51.7" lengthAdjust="spacingAndGlyphs" stroke="#f4f4f7" stroke-width="0.85" stroke-linejoin="round">SYNC</text>
<text x="316.2" y="529.6" font-size="18.39" fill="#f4f4f7" textLength="50.0" lengthAdjust="spacingAndGlyphs" stroke="#f4f4f7" stroke-width="0.85" stroke-linejoin="round">SNAP</text>
<path d="M163.97,620.43A37.10,37.10 0 1 1 216.43,620.43" fill="none" stroke="#686e7f" stroke-width="2.4" stroke-linecap="round"/>
<path d="M163.97,620.43A37.10,37.10 0 0 1 156.31,579.11" fill="none" stroke="#b2b7c7" stroke-width="2.4" stroke-linecap="round"/>
<path d="M155.21,578.62L163.62,582.36" stroke="#b2b7c7" stroke-width="2.4"/>
<path d="M180.26,589.98L174.92,587.71" stroke="#d4d7df" stroke-width="3.2" stroke-linecap="round"/>
<path d="M315.77,620.43A37.10,37.10 0 1 1 368.23,620.43" fill="none" stroke="#686e7f" stroke-width="2.4" stroke-linecap="round"/>
<path d="M314.45,620.81L321.07,614.41" stroke="#b2b7c7" stroke-width="2.4"/>
<path d="M334.10,601.57L329.86,605.52" stroke="#d4d7df" stroke-width="3.2" stroke-linecap="round"/>
<path d="M163.97,765.43A37.10,37.10 0 1 1 216.43,765.43" fill="none" stroke="#686e7f" stroke-width="2.4" stroke-linecap="round"/>
<path d="M163.97,765.43A37.10,37.10 0 0 1 156.31,724.11" fill="none" stroke="#b2b7c7" stroke-width="2.4" stroke-linecap="round"/>
<path d="M155.21,723.62L163.62,727.36" stroke="#b2b7c7" stroke-width="2.4"/>
<path d="M180.26,734.98L174.92,732.71" stroke="#d4d7df" stroke-width="3.2" stroke-linecap="round"/>
<path d="M315.77,765.43A37.10,37.10 0 1 1 368.23,765.43" fill="none" stroke="#686e7f" stroke-width="2.4" stroke-linecap="round"/>
<path d="M315.77,765.43A37.10,37.10 0 0 1 342.00,702.10" fill="none" stroke="#b2b7c7" stroke-width="2.4" stroke-linecap="round"/>
<path d="M342.00,700.90L342.00,710.10" stroke="#b2b7c7" stroke-width="2.4"/>
<path d="M342.00,728.40L342.00,722.60" stroke="#d4d7df" stroke-width="3.2" stroke-linecap="round"/>
<text x="168.4" y="650.2" font-size="16.50" fill="#f4f4f7" textLength="42.0" lengthAdjust="spacingAndGlyphs" stroke="#f4f4f7" stroke-width="0.85" stroke-linejoin="round">RATE</text>
<text x="313.2" y="650.2" font-size="16.50" fill="#f4f4f7" textLength="56.0" lengthAdjust="spacingAndGlyphs" stroke="#f4f4f7" stroke-width="0.85" stroke-linejoin="round">SHAPE</text>
<text x="137.8" y="794.7" font-size="16.50" fill="#f4f4f7" textLength="102.8" lengthAdjust="spacingAndGlyphs" stroke="#f4f4f7" stroke-width="0.85" stroke-linejoin="round">RANDOMIZE</text>
<text x="308.6" y="794.7" font-size="16.50" fill="#f4f4f7" textLength="64.8" lengthAdjust="spacingAndGlyphs" stroke="#f4f4f7" stroke-width="0.85" stroke-linejoin="round">OFFSET</text>
<g transform="translate(266.5,674.2) rotate(-45)" fill="none" stroke="#f3f3f7" stroke-width="2.05" stroke-linecap="round"><path d="M3.4,-4.15H9.5A4.15,4.15 0 0 1 9.5,4.15H3.4"/><path d="M-3.4,-4.15H-9.5A4.15,4.15 0 0 0 -9.5,4.15H-3.4"/><path d="M-4.3,0H4.3"/></g>
<g transform="translate(266.5,674.2)" stroke="#f3f3f7" stroke-width="1.9" stroke-linecap="round"><path d="M-5,-9.2L-3.7,-6.3M-9.2,-4.8L-6.1,-3.5M5.8,3.6L9,4.8M3,6.3L4.5,9.2"/></g>
<circle cx="118.5" cy="809.5" r="4.5" fill="none" stroke="#292c35" stroke-width="1.9"/>
<circle cx="413" cy="809.5" r="4.5" fill="none" stroke="#292c35" stroke-width="1.9"/>
<defs><linearGradient id="gfade" x1="0" y1="0" x2="0" y2="1" gradientUnits="userSpaceOnUse"><stop offset="0" stop-color="#3b3d49"/><stop offset="0.84" stop-color="#3b3d49"/><stop offset="0.93" stop-color="#3b3d49" stop-opacity="0"/><stop offset="1" stop-color="#3b3d49" stop-opacity="0"/></linearGradient></defs>
<defs><linearGradient id="gl" x1="0" y1="175" x2="0" y2="464" gradientUnits="userSpaceOnUse"><stop offset="0" stop-color="#3b3d49"/><stop offset="0.88" stop-color="#3b3d49"/><stop offset="0.95" stop-color="#3b3d49" stop-opacity="0"/></linearGradient></defs>
<rect x="876.65" y="175" width="1.5" height="289" fill="url(#gl)"/>
<rect x="832.05" y="175" width="1.5" height="289" fill="url(#gl)"/>
<rect x="803.45" y="175" width="1.5" height="289" fill="url(#gl)"/>
<rect x="781.45" y="175" width="1.5" height="289" fill="url(#gl)"/>
<rect x="763.65" y="175" width="1.5" height="289" fill="url(#gl)"/>
<rect x="716.25" y="175" width="1.5" height="289" fill="url(#gl)"/>
<rect x="685.45" y="175" width="1.5" height="289" fill="url(#gl)"/>
<rect x="663.05" y="175" width="1.5" height="289" fill="url(#gl)"/>
<rect x="644.85" y="175" width="1.5" height="289" fill="url(#gl)"/>
<rect x="587.65" y="175" width="1.5" height="289" fill="url(#gl)"/>
<rect x="553.15" y="175" width="1.5" height="289" fill="url(#gl)"/>
<rect x="528.85" y="175" width="1.5" height="289" fill="url(#gl)"/>
<rect x="509.15" y="175" width="1.5" height="289" fill="url(#gl)"/>
<rect x="921.25" y="175" width="1.5" height="289" fill="url(#gl)"/>
<rect x="949.85" y="175" width="1.5" height="289" fill="url(#gl)"/>
<rect x="971.85" y="175" width="1.5" height="289" fill="url(#gl)"/>
<rect x="989.65" y="175" width="1.5" height="289" fill="url(#gl)"/>
<rect x="1037.05" y="175" width="1.5" height="289" fill="url(#gl)"/>
<rect x="1067.85" y="175" width="1.5" height="289" fill="url(#gl)"/>
<rect x="1090.25" y="175" width="1.5" height="289" fill="url(#gl)"/>
<rect x="1108.45" y="175" width="1.5" height="289" fill="url(#gl)"/>
<rect x="1165.65" y="175" width="1.5" height="289" fill="url(#gl)"/>
<rect x="1200.15" y="175" width="1.5" height="289" fill="url(#gl)"/>
<rect x="1224.45" y="175" width="1.5" height="289" fill="url(#gl)"/>
<rect x="1244.15" y="175" width="1.5" height="289" fill="url(#gl)"/>
<rect x="475.65" y="175" width="1.5" height="289" fill="url(#gl)"/>
<rect x="1280.6" y="175" width="1.6" height="289.5" fill="#4b5161"/>
<rect x="799.7" y="198.5" width="3.8" height="115.3" rx="1.9" fill="#24232f"/>
<rect x="814.3" y="198.5" width="3.8" height="115.3" rx="1.9" fill="#3d3868"/>
<rect x="826.4" y="198.5" width="3.8" height="115.3" rx="1.9" fill="#5e55b0"/>
<rect x="839.8" y="198.5" width="3.8" height="115.3" rx="1.9" fill="#8272ec"/>
<rect x="856.1" y="198.5" width="3.8" height="115.3" rx="1.9" fill="#8474ee"/>
<rect x="814.3" y="323" width="3.8" height="115.6" rx="1.9" fill="#221f2b"/>
<rect x="825.7" y="323" width="3.8" height="115.6" rx="1.9" fill="#36293f"/>
<rect x="839.4" y="323" width="3.8" height="115.6" rx="1.9" fill="#7a4a93"/>
<rect x="855.4" y="323" width="3.8" height="115.6" rx="1.9" fill="#b664d6"/>
<rect x="875.5" y="323" width="3.8" height="115.6" rx="1.9" fill="#d575f2"/>
<text x="456.0" y="198.1" font-size="15.19" fill="#8a8fa1" textLength="6.7" lengthAdjust="spacingAndGlyphs" stroke="#8a8fa1" stroke-width="0.45" stroke-linejoin="round">L</text>
<text x="455.1" y="452.3" font-size="15.33" fill="#8a8fa1" textLength="8.6" lengthAdjust="spacingAndGlyphs" stroke="#8a8fa1" stroke-width="0.45" stroke-linejoin="round">R</text>
<circle cx="459.6" cy="248" r="9.1" fill="none" stroke="#fff" stroke-width="2.3"/><path d="M459.6,241.7A6.3,6.3 0 0 1 459.6,254.3Z" fill="#fff"/>
<circle cx="459.55" cy="390.8" r="9.1" fill="none" stroke="#fff" stroke-width="2.3"/><path d="M459.55,384.5A6.3,6.3 0 0 1 459.55,397.1Z" fill="#fff"/>
<text x="485.0" y="456.2" font-size="14.46" fill="#8a8fa1" textLength="49.5" lengthAdjust="spacingAndGlyphs" stroke="#8a8fa1" stroke-width="0.45" stroke-linejoin="round">-5 kHz</text>
<text x="621.9" y="456.2" font-size="14.46" fill="#8a8fa1" textLength="46.8" lengthAdjust="spacingAndGlyphs" stroke="#8a8fa1" stroke-width="0.45" stroke-linejoin="round">-1 kHz</text>
<text x="733.6" y="456.2" font-size="14.46" fill="#8a8fa1" textLength="60.7" lengthAdjust="spacingAndGlyphs" stroke="#8a8fa1" stroke-width="0.45" stroke-linejoin="round">-200 Hz</text>
<text x="872.6" y="456.2" font-size="14.46" fill="#8a8fa1" textLength="8.6" lengthAdjust="spacingAndGlyphs" stroke="#8a8fa1" stroke-width="0.45" stroke-linejoin="round">0</text>
<text x="963.5" y="456.2" font-size="14.46" fill="#8a8fa1" textLength="52.5" lengthAdjust="spacingAndGlyphs" stroke="#8a8fa1" stroke-width="0.45" stroke-linejoin="round">200 Hz</text>
<text x="1089.3" y="456.2" font-size="14.46" fill="#8a8fa1" textLength="38.5" lengthAdjust="spacingAndGlyphs" stroke="#8a8fa1" stroke-width="0.45" stroke-linejoin="round">1 kHz</text>
<text x="1223.2" y="456.2" font-size="14.46" fill="#8a8fa1" textLength="41.8" lengthAdjust="spacingAndGlyphs" stroke="#8a8fa1" stroke-width="0.45" stroke-linejoin="round">5 kHz</text>
<text x="1325.4" y="244.5" font-size="18.68" fill="#8e93a6" textLength="57.8" lengthAdjust="spacingAndGlyphs" stroke="#8e93a6" stroke-width="0.45" stroke-linejoin="round">STYLE</text>
<text x="1307.9" y="270.6" font-size="18.39" fill="#f6f6f8" textLength="92.9" lengthAdjust="spacingAndGlyphs" stroke="#f6f6f8" stroke-width="0.85" stroke-linejoin="round">RING MOD</text>
<rect x="1305.8" y="317.7" width="98.6" height="1.6" fill="#3d414d"/>
<text x="1328.6" y="374.1" font-size="17.95" fill="#8e93a6" textLength="53.5" lengthAdjust="spacingAndGlyphs" stroke="#8e93a6" stroke-width="0.45" stroke-linejoin="round">MODE</text>
<text x="1318.6" y="403.9" font-size="17.37" fill="#f6f6f8" textLength="71.9" lengthAdjust="spacingAndGlyphs" stroke="#f6f6f8" stroke-width="0.85" stroke-linejoin="round">STEREO</text>
<defs><linearGradient id="ntc" x1="0" y1="0" x2="0" y2="1"><stop offset="0" stop-color="#3d434e"/><stop offset="1" stop-color="#464d5b"/></linearGradient></defs>
<path d="M630,479H834V481.4L824.5,481.6L803,501.8Q800.8,503.8 797.5,503.8H667Q663.7,503.8 661.5,501.8L640,481.6L630,481.4Z" fill="#424855"/>
<path d="M632.5,481.6L640,481.8L661.5,501.8Q663.7,503.8 667,503.8H797.5Q800.8,503.8 803,501.8L824.5,481.8L832,481.6" fill="none" stroke="#2f333d" stroke-width="1.4"/>
<path d="M648.3,481L819.3,481L801.6,495.6Q800.4,496.5 798.6,496.5H668.6Q666.9,496.5 665.7,495.6Z" fill="#1d1c26"/>
<text x="506.6" y="507.2" font-size="17.30" fill="#f4f4f7" textLength="25.4" lengthAdjust="spacingAndGlyphs" stroke="#f4f4f7" stroke-width="0.6" stroke-linejoin="round">FM</text>
<rect x="472" y="519" width="98.4" height="1.6" fill="#505565"/>
<text x="494.6" y="546.2" font-size="15.63" fill="#f4f4f7" textLength="51.0" lengthAdjust="spacingAndGlyphs" stroke="#f4f4f7" stroke-width="0.85" stroke-linejoin="round">INPUT</text>
<path d="M473.4,533.2L465,540.4L473.4,547.6" fill="none" stroke="#7a63e6" stroke-width="2.3" stroke-linecap="round" stroke-linejoin="round"/>
<path d="M569.4,533.2L577.8,540.4L569.4,547.6" fill="none" stroke="#7a63e6" stroke-width="2.3" stroke-linecap="round" stroke-linejoin="round"/>
<path d="M494.87,632.83A37.10,37.10 0 1 1 547.33,632.83" fill="none" stroke="#7d8291" stroke-width="2.5" stroke-linecap="round"/>
<path d="M494.87,632.83A37.10,37.10 0 1 1 556.38,618.06" fill="none" stroke="#c3c7d3" stroke-width="2.5" stroke-linecap="round"/>
<path d="M557.57,618.45L548.78,615.59" stroke="#c3c7d3" stroke-width="2.5"/>
<path d="M530.71,609.36L536.29,610.96" stroke="#e3e5de" stroke-width="3.2" stroke-linecap="round"/>
<path d="M494.87,761.13A37.10,37.10 0 1 1 547.33,761.13" fill="none" stroke="#7d8291" stroke-width="2.5" stroke-linecap="round"/>
<path d="M494.87,761.13A37.10,37.10 0 0 1 486.02,746.98" fill="none" stroke="#c3c7d3" stroke-width="2.5" stroke-linecap="round"/>
<path d="M484.84,747.39L493.59,744.37" stroke="#c3c7d3" stroke-width="2.5"/>
<path d="M511.54,737.82L505.99,739.52" stroke="#e3e5de" stroke-width="3.2" stroke-linecap="round"/>
<text x="479.2" y="662.9" font-size="17.22" fill="#f4f4f7" textLength="82.3" lengthAdjust="spacingAndGlyphs" stroke="#f4f4f7" stroke-width="0.85" stroke-linejoin="round">LOWPASS</text>
<text x="482.4" y="791.0" font-size="16.79" fill="#f4f4f7" textLength="75.3" lengthAdjust="spacingAndGlyphs" stroke="#f4f4f7" stroke-width="0.85" stroke-linejoin="round">AMOUNT</text>
<rect x="666.7" y="527" width="1.6" height="27.4" fill="#646a7c"/><rect x="783" y="527" width="1.6" height="27.4" fill="#646a7c"/>
<path d="M647.6,534L639.2,541.2L647.6,548.4" fill="none" stroke="#fff" stroke-width="2.8" stroke-linecap="round" stroke-linejoin="round"/>
<path d="M803,534L811.4,541.2L803,548.4" fill="none" stroke="#fff" stroke-width="2.8" stroke-linecap="round" stroke-linejoin="round"/>
<text x="702.5" y="546.6" font-size="17.22" fill="#f4f4f7" textLength="44.8" lengthAdjust="spacingAndGlyphs" stroke="#f4f4f7" stroke-width="0.85" stroke-linejoin="round">FAST</text>
<path d="M679.20,707.60A65.90,65.90 0 1 1 772.40,707.60" fill="none" stroke="#686e7f" stroke-width="3.4" stroke-linecap="round"/>
<path d="M679.20,707.60A65.90,65.90 0 0 1 725.80,595.10" fill="none" stroke="#b2b7c7" stroke-width="3.4" stroke-linecap="round"/>
<path d="M725.80,593.40L725.80,607.60" stroke="#b2b7c7" stroke-width="3.3"/>
<path d="M725.80,636.40L725.80,631.00" stroke="#d4d7df" stroke-width="5" stroke-linecap="round"/>
<text x="669.0" y="750.0" font-size="18.53" fill="#f4f4f7" textLength="114.9" lengthAdjust="spacingAndGlyphs" stroke="#f4f4f7" stroke-width="0.85" stroke-linejoin="round">FREQUENCY</text>
<path d="M612.2,785.5H720.5Q726.5,785.5 726.5,779.5V765.6" fill="none" stroke="#5a5e7e" stroke-width="1.5"/>
<text x="881.5" y="529.7" font-size="18.53" fill="#a9aebf" textLength="105.3" lengthAdjust="spacingAndGlyphs" stroke="#a9aebf" stroke-width="0.45" stroke-linejoin="round">SOFT SYNC</text>
<text x="916.8" y="555.0" font-size="17.22" fill="#f4f4f7" textLength="34.4" lengthAdjust="spacingAndGlyphs" stroke="#f4f4f7" stroke-width="0.85" stroke-linejoin="round">OFF</text>
<text x="898.9" y="633.6" font-size="18.10" fill="#a9aebf" textLength="71.1" lengthAdjust="spacingAndGlyphs" stroke="#a9aebf" stroke-width="0.45" stroke-linejoin="round">STEREO</text>
<text x="920.8" y="659.4" font-size="18.82" fill="#f4f4f7" textLength="25.3" lengthAdjust="spacingAndGlyphs" stroke="#f4f4f7" stroke-width="0.85" stroke-linejoin="round">0%</text>
<path d="M908.07,761.03A37.10,37.10 0 1 1 960.53,761.03" fill="none" stroke="#686e7f" stroke-width="2.4" stroke-linecap="round"/>
<path d="M908.07,761.03A37.10,37.10 0 0 1 956.63,705.17" fill="none" stroke="#b2b7c7" stroke-width="2.4" stroke-linecap="round"/>
<path d="M957.35,704.21L951.81,711.56" stroke="#b2b7c7" stroke-width="2.4"/>
<path d="M940.34,725.85L943.58,721.04" stroke="#d4d7df" stroke-width="3.2" stroke-linecap="round"/>
<text x="900.1" y="790.8" font-size="15.92" fill="#f4f4f7" textLength="67.0" lengthAdjust="spacingAndGlyphs" stroke="#f4f4f7" stroke-width="0.85" stroke-linejoin="round">SPREAD</text>
<defs><clipPath id="fclip"><path d="M1039.5,607V492Q1039.5,482 1049.5,482H1420.2Q1430.2,482 1430.2,492V607Z"/></clipPath><linearGradient id="ffill" x1="0" y1="513" x2="0" y2="607" gradientUnits="userSpaceOnUse"><stop offset="0" stop-color="#544aa8"/><stop offset="0.5" stop-color="#3f3974" stop-opacity=".85"/><stop offset="1" stop-color="#2a2940" stop-opacity=".55"/></linearGradient><linearGradient id="gfill" x1="0" y1="540" x2="0" y2="607" gradientUnits="userSpaceOnUse"><stop offset="0" stop-color="#3a3d48"/><stop offset="1" stop-color="#2a2c36"/></linearGradient></defs>
<g clip-path="url(#fclip)"><path d="M1038.5,550.5Q1052.0,551.8 1058.3,552.0Q1064.7,552.2 1070.3,550.9Q1076.0,549.5 1082.3,547.2Q1088.7,545.0 1093.3,543.3Q1098.0,541.6 1102.7,541.1Q1107.4,540.6 1111.2,541.5Q1115.0,542.5 1119.2,544.0Q1123.4,545.5 1127.2,545.0Q1131.0,544.6 1135.2,542.5Q1139.4,540.4 1143.2,543.2Q1147.0,546.0 1151.2,549.9Q1155.5,553.8 1157.2,550.9Q1159.0,548.0 1160.5,543.2Q1162.1,538.5 1164.0,543.2Q1166.0,548.0 1168.0,553.1Q1170.1,558.3 1172.0,554.6Q1174.0,551.0 1175.7,547.0Q1177.4,543.1 1179.2,545.0Q1181.0,547.0 1182.9,549.0Q1184.8,551.1 1186.2,550.5Q1187.5,550.0 1188.8,549.2Q1190.2,548.4 1191.2,550.2Q1192.2,552.0 1193.2,554.2Q1194.2,556.4 1195.3,555.2Q1196.5,554.0 1197.6,552.5Q1198.7,551.1 1199.8,553.5Q1201.0,556.0 1202.2,558.9Q1203.5,561.8 1204.8,559.9Q1206.0,558.0 1207.2,555.9Q1208.3,553.8 1210.7,555.4Q1213.0,557.0 1217.3,558.0Q1221.7,559.0 1224.8,560.5Q1228.0,562.0 1230.5,563.2Q1232.9,564.4 1235.0,566.5Q1237.0,568.5 1239.0,570.5Q1240.9,572.4 1241.6,571.5Q1242.3,570.5 1242.9,569.5Q1243.6,568.4 1244.6,570.2Q1245.6,572.0 1246.6,574.2Q1247.6,576.4 1248.6,575.2Q1249.6,574.0 1250.6,572.5Q1251.6,571.1 1252.9,573.3Q1254.2,575.5 1255.6,578.0Q1256.9,580.4 1257.7,579.2Q1258.5,578.0 1259.3,576.5Q1260.1,575.1 1261.7,577.8Q1263.2,580.5 1264.7,583.1Q1266.2,585.8 1266.9,584.9Q1267.6,584.0 1268.2,582.9Q1268.9,581.8 1271.0,585.1Q1273.0,588.5 1275.0,591.8Q1276.9,595.1 1277.9,594.5Q1278.9,594.0 1279.9,593.2Q1280.9,592.5 1281.6,594.5Q1282.3,596.5 1282.9,598.5Q1283.6,600.5 1284.2,599.5Q1284.7,598.5 1285.2,597.5Q1285.7,596.5 1286.8,599.0Q1288.0,601.5 1289.2,604.2L1290.3,607.0L1290.3,607L1038.5,607Z" fill="url(#gfill)"/>
<path d="M1038.6,607.6L1118.1,540.4C1132,528.6 1146,520.6 1163,517C1178,514 1196,513.4 1222,513.2C1246,513.2 1262,514 1275,517.2C1292,521.6 1306,529 1318.3,537L1408,607.6Z" fill="url(#ffill)"/>
<path d="M1038.5,550.5Q1052.0,551.8 1058.3,552.0Q1064.7,552.2 1070.3,550.9Q1076.0,549.5 1082.3,547.2Q1088.7,545.0 1093.3,543.3Q1098.0,541.6 1102.7,541.1Q1107.4,540.6 1111.2,541.5Q1115.0,542.5 1119.2,544.0Q1123.4,545.5 1127.2,545.0Q1131.0,544.6 1135.2,542.5Q1139.4,540.4 1143.2,543.2Q1147.0,546.0 1151.2,549.9Q1155.5,553.8 1157.2,550.9Q1159.0,548.0 1160.5,543.2Q1162.1,538.5 1164.0,543.2Q1166.0,548.0 1168.0,553.1Q1170.1,558.3 1172.0,554.6Q1174.0,551.0 1175.7,547.0Q1177.4,543.1 1179.2,545.0Q1181.0,547.0 1182.9,549.0Q1184.8,551.1 1186.2,550.5Q1187.5,550.0 1188.8,549.2Q1190.2,548.4 1191.2,550.2Q1192.2,552.0 1193.2,554.2Q1194.2,556.4 1195.3,555.2Q1196.5,554.0 1197.6,552.5Q1198.7,551.1 1199.8,553.5Q1201.0,556.0 1202.2,558.9Q1203.5,561.8 1204.8,559.9Q1206.0,558.0 1207.2,555.9Q1208.3,553.8 1210.7,555.4Q1213.0,557.0 1217.3,558.0Q1221.7,559.0 1224.8,560.5Q1228.0,562.0 1230.5,563.2Q1232.9,564.4 1235.0,566.5Q1237.0,568.5 1239.0,570.5Q1240.9,572.4 1241.6,571.5Q1242.3,570.5 1242.9,569.5Q1243.6,568.4 1244.6,570.2Q1245.6,572.0 1246.6,574.2Q1247.6,576.4 1248.6,575.2Q1249.6,574.0 1250.6,572.5Q1251.6,571.1 1252.9,573.3Q1254.2,575.5 1255.6,578.0Q1256.9,580.4 1257.7,579.2Q1258.5,578.0 1259.3,576.5Q1260.1,575.1 1261.7,577.8Q1263.2,580.5 1264.7,583.1Q1266.2,585.8 1266.9,584.9Q1267.6,584.0 1268.2,582.9Q1268.9,581.8 1271.0,585.1Q1273.0,588.5 1275.0,591.8Q1276.9,595.1 1277.9,594.5Q1278.9,594.0 1279.9,593.2Q1280.9,592.5 1281.6,594.5Q1282.3,596.5 1282.9,598.5Q1283.6,600.5 1284.2,599.5Q1284.7,598.5 1285.2,597.5Q1285.7,596.5 1286.8,599.0Q1288.0,601.5 1289.2,604.2L1290.3,607.0" fill="none" stroke="#8688a0" stroke-width="1.8" stroke-linejoin="round"/>
<path d="M1038.6,607.6L1118.1,540.4C1132,528.6 1146,520.6 1163,517C1178,514 1196,513.4 1222,513.2C1246,513.2 1262,514 1275,517.2C1292,521.6 1306,529 1318.3,537L1408,607.6Z" fill="none" stroke="#8a78f2" stroke-width="1.8"/></g>
<circle cx="1221.7" cy="557.2" r="9.9" fill="#9c86f6" stroke="#b7a6fb" stroke-width="1.7"/>
<rect x="1039.5" y="606.6" width="390.7" height="1.2" fill="#2f303b"/>
<text x="1072.1" y="630.0" font-size="18.97" fill="#a9aebf" textLength="47.6" lengthAdjust="spacingAndGlyphs" stroke="#a9aebf" stroke-width="0.45" stroke-linejoin="round">FREQ</text>
<text x="1134.0" y="629.8" font-size="18.39" fill="#f6f6f8" textLength="63.8" lengthAdjust="spacingAndGlyphs" stroke="#f6f6f8" stroke-width="0.85" stroke-linejoin="round">553 Hz</text>
<rect x="1232.9" y="612.5" width="1.6" height="22.8" fill="#454855"/>
<text x="1275.8" y="630.0" font-size="18.97" fill="#a9aebf" textLength="61.5" lengthAdjust="spacingAndGlyphs" stroke="#a9aebf" stroke-width="0.45" stroke-linejoin="round">WIDTH</text>
<text x="1350.7" y="629.8" font-size="18.39" fill="#f6f6f8" textLength="36.6" lengthAdjust="spacingAndGlyphs" stroke="#f6f6f8" stroke-width="0.85" stroke-linejoin="round">37%</text>
<path d="M1109.67,751.33A49.40,49.40 0 1 1 1179.53,751.33" fill="none" stroke="#686e7f" stroke-width="3.6" stroke-linecap="round"/>
<path d="M1109.67,751.33A49.40,49.40 0 0 1 1152.33,667.61" fill="none" stroke="#b2b7c7" stroke-width="3.6" stroke-linecap="round"/>
<path d="M1152.61,665.83L1150.53,678.97" stroke="#b2b7c7" stroke-width="3.4"/>
<path d="M1146.24,704.71L1147.05,698.97" stroke="#d4d7df" stroke-width="5.2" stroke-linecap="round"/>
<text x="1095.4" y="790.4" font-size="17.95" fill="#f4f4f7" textLength="97.9" lengthAdjust="spacingAndGlyphs" stroke="#f4f4f7" stroke-width="0.85" stroke-linejoin="round">FEEDBACK</text>
<path d="M1198.9,689.6L1214,681" stroke="#262932" stroke-width="1.6"/>
<path d="M1221,675H1226.4Q1228.6,675 1229.8,673L1234.6,664.1Q1235.8,662.1 1238,662.1H1243.7M1221,662.1H1226.4Q1228.7,662.1 1229.7,664.5M1235,672.4Q1236.2,675 1238.4,675H1243.7" fill="none" stroke="#f4f2ff" stroke-width="2.4" stroke-linecap="round" stroke-linejoin="round"/>
<text x="1319.8" y="672.9" font-size="16.64" fill="#f4f4f7" textLength="51.1" lengthAdjust="spacingAndGlyphs" stroke="#f4f4f7" stroke-width="0.85" stroke-linejoin="round">SYNC</text>
<path d="M1321.77,760.83A37.10,37.10 0 1 1 1374.23,760.83" fill="none" stroke="#686e7f" stroke-width="2.4" stroke-linecap="round"/>
<path d="M1321.77,760.83A37.10,37.10 0 0 1 1356.03,698.38" fill="none" stroke="#b2b7c7" stroke-width="2.4" stroke-linecap="round"/>
<path d="M1356.29,697.21L1354.30,706.19" stroke="#b2b7c7" stroke-width="2.4"/>
<path d="M1350.25,724.04L1351.45,718.36" stroke="#d4d7df" stroke-width="3.2" stroke-linecap="round"/>
<text x="1328.0" y="791.0" font-size="16.50" fill="#f4f4f7" textLength="39.5" lengthAdjust="spacingAndGlyphs" stroke="#f4f4f7" stroke-width="0.85" stroke-linejoin="round">TIME</text>
<circle cx="1051.2" cy="809.7" r="4.5" fill="none" stroke="#292c35" stroke-width="1.9"/>
<circle cx="1415.6" cy="809.7" r="4.5" fill="none" stroke="#292c35" stroke-width="1.9"/>
<defs><linearGradient id="fbg" x1="0" y1="845" x2="0" y2="893" gradientUnits="userSpaceOnUse"><stop offset="0" stop-color="#3c444e"/><stop offset="1" stop-color="#384049"/></linearGradient></defs>
<path d="M101.5,844.8H459Q472.8,844.8 467.5,850.3L434.5,884.7Q426.5,893 414,893H101.5Q89.5,893 89.5,881V856.8Q89.5,844.8 101.5,844.8Z" fill="url(#fbg)"/>
<path d="M498,844.8H1038Q1050.5,844.8 1057.5,852.1L1096.8,893H439.2L478.5,852.1Q485.5,844.8 498,844.8Z" fill="url(#fbg)"/>
<path d="M1434.5,844.8H1077Q1063.2,844.8 1068.5,850.3L1101.5,884.7Q1109.5,893 1122,893H1434.5Q1446.5,893 1446.5,881V856.8Q1446.5,844.8 1434.5,844.8Z" fill="url(#fbg)"/>
<circle cx="102.2" cy="884.3" r="4.7" fill="none" stroke="#858a9c" stroke-width="1.7"/>
<circle cx="1433.8" cy="884.5" r="4.7" fill="none" stroke="#858a9c" stroke-width="1.7"/>
<rect x="169.7" y="858.7" width="170.0" height="9.4" rx="4.70" fill="#646c81"/>
<path d="M174.40,858.7H306.1V868.1H174.40A4.70,4.70 0 0 1 174.40,858.7Z" fill="#a2aac2"/>
<rect x="306.1" y="858.7" width="3.1" height="9.4" fill="#7c839b"/><rect x="309.20000000000005" y="858.7" width="4.2" height="9.4" fill="#a0a7bf"/>
<rect x="1193.7" y="858.7" width="170.0" height="9.4" rx="4.70" fill="#646c81"/>
<path d="M1198.40,858.7H1330.1V868.1H1198.40A4.70,4.70 0 0 1 1198.40,858.7Z" fill="#a2aac2"/>
<rect x="1330.1" y="858.7" width="3.1" height="9.4" fill="#7c839b"/><rect x="1333.1999999999998" y="858.7" width="4.2" height="9.4" fill="#a0a7bf"/>
<text x="228.7" y="886.0" font-size="15.19" fill="#f4f4f7" textLength="50.8" lengthAdjust="spacingAndGlyphs" stroke="#f4f4f7" stroke-width="0.85" stroke-linejoin="round">INPUT</text>
<text x="1243.1" y="886.0" font-size="15.19" fill="#f4f4f7" textLength="70.2" lengthAdjust="spacingAndGlyphs" stroke="#f4f4f7" stroke-width="0.85" stroke-linejoin="round">OUTPUT</text>
<defs><linearGradient id="pbtn" x1="0" y1="0" x2="1" y2="1"><stop offset="0" stop-color="#8272f6"/><stop offset="0.55" stop-color="#6a5ae6"/><stop offset="1" stop-color="#5647d2"/></linearGradient><linearGradient id="obtn" x1="0" y1="0" x2="1" y2="1"><stop offset="0" stop-color="#f2492e"/><stop offset="0.5" stop-color="#f8640f"/><stop offset="1" stop-color="#fc900a"/></linearGradient><filter id="bsh" x="-30%" y="-30%" width="160%" height="170%"><feGaussianBlur stdDeviation="2.2"/></filter></defs>
<circle cx="374.5" cy="871" r="17" fill="#14161d" opacity=".45" filter="url(#bsh)"/><circle cx="374.4" cy="868.4" r="18.3" fill="url(#pbtn)"/>
<path d="M367.5,866.9L374.4,860.9L381.3,866.9M367.5,874.5L374.4,868.5L381.3,874.5" fill="none" stroke="#fff" stroke-width="2.8" stroke-linecap="round" stroke-linejoin="round"/>
<path d="M1080.2,852.1L1085.0,852.1L1096.9,863.8L1091.5,863.8Z" fill="#6d7687"/>
<path d="M1091.5,863.8L1096.9,863.8L1121.6,888.2L1115.0,888.2Z" fill="#7f6ff2"/>
<path d="M1089.1,852.1L1093.7,852.1L1105.8,863.8L1100.5,863.8Z" fill="#6d7687"/>
<path d="M1100.5,863.8L1105.8,863.8L1131.0,888.2L1124.2,888.2Z" fill="#7f6ff2"/>
<path d="M455.8,852.1L451.0,852.1L443.2,859.8L448.4,859.8Z" fill="#6d7687"/>
<path d="M448.4,859.8L443.2,859.8L414.4,888.2L421.0,888.2Z" fill="#7f6ff2"/>
<path d="M446.9,852.1L442.3,852.1L434.3,859.8L439.4,859.8Z" fill="#6d7687"/>
<path d="M439.4,859.8L434.3,859.8L405.0,888.2L411.8,888.2Z" fill="#7f6ff2"/>
<text x="549.3" y="875.6" font-size="16.21" fill="#f4f4f7" textLength="33.8" lengthAdjust="spacingAndGlyphs" stroke="#f4f4f7" stroke-width="0.85" stroke-linejoin="round">DRY</text>
<text x="951.7" y="873.9" font-size="16.64" fill="#f4f4f7" textLength="36.6" lengthAdjust="spacingAndGlyphs" stroke="#f4f4f7" stroke-width="0.85" stroke-linejoin="round">WET</text>
<rect x="595.7" y="864.3" width="341.9" height="9.4" rx="4.7" fill="#667086"/><path d="M600.4,864.3H767V873.7H600.4A4.7,4.7 0 0 1 600.4,864.3Z" fill="#a5adc7"/>
<rect x="762.9" y="852.7" width="8" height="32.6" rx="4" fill="#fff"/>
<circle cx="1398.9" cy="871" r="17" fill="#14161d" opacity=".45" filter="url(#bsh)"/><circle cx="1398.9" cy="868.1" r="18.4" fill="url(#obtn)" stroke="#5a2a1c" stroke-opacity=".6" stroke-width="1"/>
<path d="M1390.8,874.8H1396.6L1401,860.2H1407" fill="none" stroke="#fff4dc" stroke-width="2.4" stroke-linecap="round" stroke-linejoin="round"/>
</svg>
</div>
</body></html>
